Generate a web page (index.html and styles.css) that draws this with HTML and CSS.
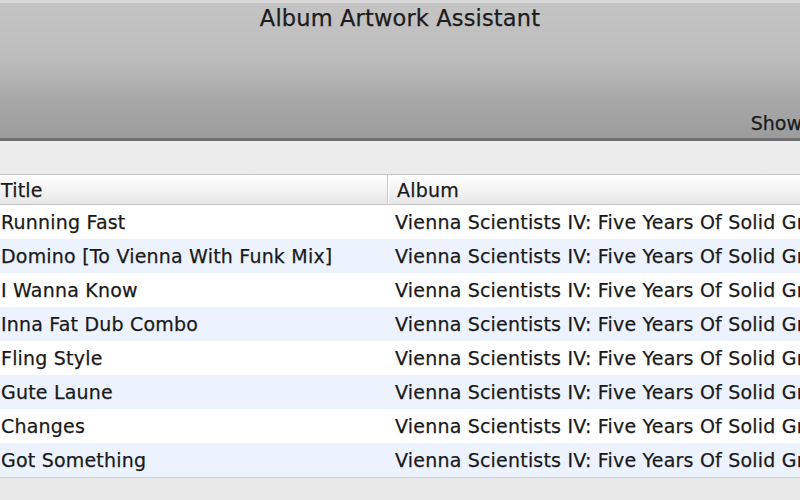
FILE: index.html
```html
<!DOCTYPE html>
<html>
<head>
<meta charset="utf-8">
<link rel="stylesheet" href="styles.css">
</head>
<body>
<div class="window">
  <div class="toolbar">
    <div class="title">Album Artwork Assistant</div>
    <div class="toolbar-bottom"><span class="show">Show</span></div>
  </div>
  <div class="gap"></div>
  <div class="table">
    <div class="row head">
      <div class="cell c1">Title</div>
      <div class="cell c2">Album</div>
    </div>
    <div class="row"><div class="cell c1">Running Fast</div><div class="cell c2">Vienna Scientists IV: Five Years Of Solid Grooves</div></div>
    <div class="row alt"><div class="cell c1">Domino [To Vienna With Funk Mix]</div><div class="cell c2">Vienna Scientists IV: Five Years Of Solid Grooves</div></div>
    <div class="row"><div class="cell c1">I Wanna Know</div><div class="cell c2">Vienna Scientists IV: Five Years Of Solid Grooves</div></div>
    <div class="row alt"><div class="cell c1">Inna Fat Dub Combo</div><div class="cell c2">Vienna Scientists IV: Five Years Of Solid Grooves</div></div>
    <div class="row"><div class="cell c1">Fling Style</div><div class="cell c2">Vienna Scientists IV: Five Years Of Solid Grooves</div></div>
    <div class="row alt"><div class="cell c1">Gute Laune</div><div class="cell c2">Vienna Scientists IV: Five Years Of Solid Grooves</div></div>
    <div class="row"><div class="cell c1">Changes</div><div class="cell c2">Vienna Scientists IV: Five Years Of Solid Grooves</div></div>
    <div class="row alt"><div class="cell c1">Got Something</div><div class="cell c2">Vienna Scientists IV: Five Years Of Solid Grooves</div></div>
  </div>
</div>
</body>
</html>
```
FILE: styles.css
```css
html, body {
  margin: 0;
  padding: 0;
  width: 800px;
  height: 500px;
  overflow: hidden;
  background: #e9e9e9;
  font-family: "DejaVu Sans", "Liberation Sans", sans-serif;
  color: #1a1a1a;
}
.window {
  display: flex;
  flex-direction: column;
  width: 800px;
}
.toolbar {
  box-sizing: border-box;
  height: 141px;
  border-top: 3px solid #d8d8d8;
  border-bottom: 3px solid #707070;
  background: linear-gradient(#c4c4c4 0%, #bdbdbd 40%, #a6a6a6 75%, #9c9c9c 100%);
  display: flex;
  flex-direction: column;
  justify-content: space-between;
}
.title {
  text-align: center;
  font-size: 22.5px;
  letter-spacing: 0.15px;
  padding-top: 2px;
  color: #1c1c1c;
  -webkit-text-stroke: 0.25px #1c1c1c;
}
.toolbar-bottom {
  display: flex;
  justify-content: flex-end;
  padding-bottom: 4px;
}
.show {
  font-size: 19px;
  margin-right: -2px;
  white-space: nowrap;
  -webkit-text-stroke: 0.25px #1a1a1a;
}
.gap {
  height: 33px;
  background: #ececec;
}
.table {
  display: flex;
  flex-direction: column;
  border-bottom: 1px solid #cfcfcf;
}
.row {
  display: flex;
  height: 34px;
  align-items: center;
  background: #ffffff;
  white-space: nowrap;
  overflow: hidden;
}
.row.alt {
  background: #edf3fe;
}
.row.head {
  height: 31px;
  box-sizing: border-box;
  border-top: 1px solid #c4c4c4;
  border-bottom: 1px solid #c4c4c4;
  background: linear-gradient(#ffffff 0%, #f4f4f4 50%, #e6e6e6 100%);
  align-items: stretch;
}
.cell {
  font-size: 19px;
  letter-spacing: 0.2px;
  display: flex;
  align-items: center;
  -webkit-text-stroke: 0.25px #1a1a1a;
}
.c1 {
  width: 388px;
  flex: none;
  padding-left: 1px;
  box-sizing: border-box;
}
.c2 {
  padding-left: 7px;
  flex: none;
}
.head .c1 {
  border-right: 1px solid #c8c8c8;
}
.head .c2 {
  padding-left: 8px;
  border-left: 1px solid #ffffff;
}
```
